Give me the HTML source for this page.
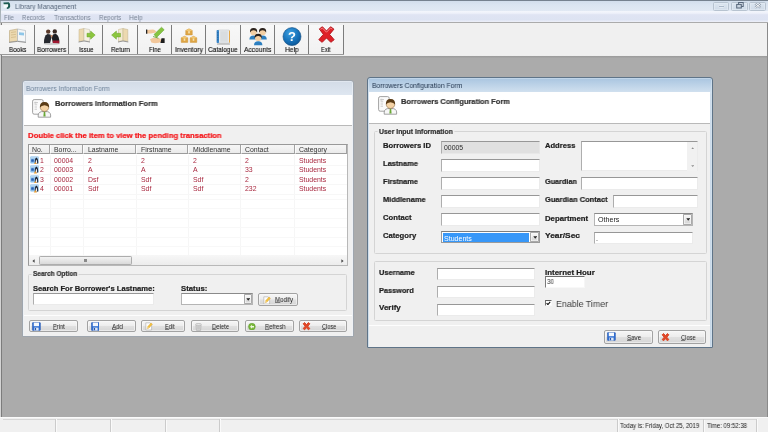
<!DOCTYPE html>
<html><head><meta charset="utf-8"><title>Library Management</title>
<style>
html,body{margin:0;padding:0;}
body{width:768px;height:432px;overflow:hidden;position:relative;background:#ababab;font-family:"Liberation Sans",sans-serif;font-size:6.6px;color:#222;}
.a{position:absolute;}
.t{position:absolute;white-space:nowrap;will-change:transform;filter:blur(0.25px);line-height:10px;height:10px;transform-origin:0 50%;}
.b{font-weight:bold;-webkit-text-stroke:0.22px;}
#titlebar{left:0;top:0;width:768px;height:11.4px;background:linear-gradient(#d2deec 0,#dbe5f1 40%,#e1e9f4 100%);border-top:0.7px solid #76828f;box-sizing:border-box;}
#menubar{left:0;top:11.4px;width:768px;height:11.1px;background:linear-gradient(#f3f6fc 0,#eef1fa 20%,#dfe4f3 34%,#dde3f2 80%,#e9ecf7 94%,#eef0f8 100%);box-sizing:border-box;}
#toolbar{left:0;top:22.5px;width:768px;height:34px;background:linear-gradient(#f0f0f0 95%,#e2e2e2);}
#tbline{left:0;top:56.3px;width:768px;height:1.4px;background:linear-gradient(#9a9a9a,#a8a8a8);}
#statusbar{left:0;top:416.6px;width:768px;height:15.4px;background:#f0f0f0;border-top:1px solid #fafafa;box-sizing:border-box;}
.sp{position:absolute;top:419.4px;height:12.6px;width:0.8px;background:#cbcbcb;box-shadow:0.8px 0 0 #fdfdfd;}
.tb{position:absolute;top:24.8px;width:34.3px;height:30.2px;background:linear-gradient(#f8f8f8,#f1f1f1);border-right:1px solid #7c7c7c;border-bottom:1px solid #9a9a9a;box-sizing:border-box;border-radius:0 0 1px 0;}
.tb .l{position:absolute;left:-5px;right:-5px;top:20.6px;text-align:center;font-size:7.2px;line-height:9px;color:#1a1a1a;}
.dlg{position:absolute;background:#f0f0f0;box-sizing:border-box;}
.inp{position:absolute;background:#fff;border:0.8px solid #ebebeb;border-top:1px solid #979797;border-left:0.9px solid #aeaeae;box-sizing:border-box;}
.btn{position:absolute;background:linear-gradient(#f6f6f6 0,#ededed 48%,#e0e0e0 52%,#d6d6d6 100%);border:0.8px solid #a2a2a2;border-radius:2px;box-sizing:border-box;box-shadow:inset 0 0 0 0.6px #fbfbfb;}
.grp{position:absolute;border:1px solid #d4d4d4;border-radius:1.5px;box-sizing:border-box;}
.gl{background:#f0f0f0;box-shadow:-1.5px 0 0 #f0f0f0,1.5px 0 0 #f0f0f0;}
.red{color:#f41418;}
.row{color:#a8283f;}
.u{background:linear-gradient(#3a3a3a,#3a3a3a) 0 100%/100% 0.6px no-repeat;}
</style></head><body>
<div class="a" id="titlebar"></div><div class="a" id="menubar"></div><div class="a" id="toolbar"></div><div class="a" id="tbline"></div><div class="a" id="statusbar"></div>
<div class="a" style="left:0px;top:22.5px;width:1.50px;height:394.10px;background:#d4d4d4;border-right:0.7px solid #7c7c7c;box-sizing:border-box;"></div>
<div class="a" style="left:766.5px;top:22.5px;width:1.50px;height:394.50px;background:#e9edf2;border-left:0.6px solid #8a8a8a;box-sizing:border-box;"></div>
<div class="t " style="left:14.75px;top:1.90px;font-size:7.6px;color:#55657a;transform:scaleX(0.879);">Library Management</div>
<svg class="a" style="left:2.6px;top:1.6px;" width="8" height="8" viewBox="0 0 8 8"><rect x="0.6" y="2" width="4.6" height="3.8" fill="#f7fbfb"/><path d="M0.4 0.5 L5.8 0.3 L7 1.8 L7.2 4.4 Q7 6.4 4.4 7 L3.4 5.9 Q5.2 5.2 5.2 3.8 L5 2.2 L0.7 2.3Z" fill="#1d5c52"/></svg>
<div class="a" style="left:0px;top:0.7px;width:1.00px;height:21.80px;background:linear-gradient(#9aa8aa,#b4bcc4);"></div>
<div class="t " style="left:4px;top:13.40px;font-size:7.5px;color:#7b8697;transform:scaleX(0.806);">File</div>
<div class="t " style="left:22.25px;top:13.40px;font-size:7.5px;color:#7b8697;transform:scaleX(0.814);">Records</div>
<div class="t " style="left:54.4px;top:13.40px;font-size:7.5px;color:#7b8697;transform:scaleX(0.858);">Transactions</div>
<div class="t " style="left:99px;top:13.40px;font-size:7.5px;color:#7b8697;transform:scaleX(0.847);">Reports</div>
<div class="t " style="left:129.4px;top:13.40px;font-size:7.5px;color:#7b8697;transform:scaleX(0.887);">Help</div>
<div class="a" style="left:712.7px;top:2px;width:16.30px;height:8.50px;border:0.7px solid #b7c3d0;border-radius:1.6px;box-sizing:border-box;background:linear-gradient(#dbe5f0,#cfdbe8);box-shadow:inset 0 0 0 0.6px #e6edf5;"></div>
<div class="a" style="left:731px;top:2px;width:16.80px;height:8.50px;border:0.7px solid #b7c3d0;border-radius:1.6px;box-sizing:border-box;background:linear-gradient(#dbe5f0,#cfdbe8);box-shadow:inset 0 0 0 0.6px #e6edf5;"></div>
<div class="a" style="left:749.4px;top:2px;width:17.10px;height:8.50px;border:0.7px solid #b7c3d0;border-radius:1.6px;box-sizing:border-box;background:linear-gradient(#dbe5f0,#cfdbe8);box-shadow:inset 0 0 0 0.6px #e6edf5;"></div>
<div class="a" style="left:717.7px;top:5px;width:7.10px;height:3.40px;border:0.7px solid #e4ebf3;border-radius:1.2px;box-sizing:border-box;background:#a9b8c9;"></div>
<svg class="a" style="left:735.5px;top:2.2px;" width="8" height="6.6" viewBox="0 0 8 6.6"><rect x="2.6" y="0.5" width="4.6" height="4" fill="#d9e2ec" stroke="#56667a" stroke-width="1"/><rect x="0.7" y="2.4" width="4.6" height="3.6" fill="#c9d4e0" stroke="#56667a" stroke-width="1"/></svg>
<svg class="a" style="left:754.3px;top:3.4px;" width="8" height="5.4" viewBox="0 0 8 5.4"><path d="M1.2 0.6 L6.6 4.8 M6.6 0.6 L1.2 4.8" stroke="#8b99aa" stroke-width="2" fill="none"/><path d="M1.2 0.6 L6.6 4.8 M6.6 0.6 L1.2 4.8" stroke="#fbfcfd" stroke-width="1" fill="none"/></svg>
<div class="tb" style="left:0.30px"></div>
<div class="t " style="left:8.75px;top:45.30px;font-size:7.4px;color:#0c0c0c;-webkit-text-stroke:0.12px;transform:scaleX(0.852);">Books</div>
<div class="tb" style="left:34.63px"></div>
<div class="t " style="left:37.4px;top:45.30px;font-size:7.4px;color:#0c0c0c;-webkit-text-stroke:0.12px;transform:scaleX(0.867);">Borrowers</div>
<div class="tb" style="left:68.96px"></div>
<div class="t " style="left:78.75px;top:45.30px;font-size:7.4px;color:#0c0c0c;-webkit-text-stroke:0.12px;transform:scaleX(0.821);">Issue</div>
<div class="tb" style="left:103.29px"></div>
<div class="t " style="left:111px;top:45.30px;font-size:7.4px;color:#0c0c0c;-webkit-text-stroke:0.12px;transform:scaleX(0.856);">Return</div>
<div class="tb" style="left:137.62px"></div>
<div class="t " style="left:148.75px;top:45.30px;font-size:7.4px;color:#0c0c0c;-webkit-text-stroke:0.12px;transform:scaleX(0.823);">Fine</div>
<div class="tb" style="left:171.95px"></div>
<div class="t " style="left:174.9px;top:45.30px;font-size:7.4px;color:#0c0c0c;-webkit-text-stroke:0.12px;transform:scaleX(0.916);">Inventory</div>
<div class="tb" style="left:206.28px"></div>
<div class="t " style="left:208.25px;top:45.30px;font-size:7.4px;color:#0c0c0c;-webkit-text-stroke:0.12px;transform:scaleX(0.883);">Catalogue</div>
<div class="tb" style="left:240.61px"></div>
<div class="t " style="left:244px;top:45.30px;font-size:7.4px;color:#0c0c0c;-webkit-text-stroke:0.12px;transform:scaleX(0.901);">Accounts</div>
<div class="tb" style="left:274.94px"></div>
<div class="t " style="left:285.3px;top:45.30px;font-size:7.4px;color:#0c0c0c;-webkit-text-stroke:0.12px;transform:scaleX(0.901);">Help</div>
<div class="tb" style="left:309.27px"></div>
<div class="t " style="left:321.3px;top:45.30px;font-size:7.4px;color:#0c0c0c;-webkit-text-stroke:0.12px;transform:scaleX(0.771);">Exit</div>
<svg class="a" style="left:8px;top:27px;" width="20" height="17" viewBox="0 0 20 17"><path d="M1.5 3.5 L9.5 2 L9.5 14 L1.5 15Z" fill="#ecd9b0" stroke="#b9a47a" stroke-width="0.6"/><path d="M9.5 2 L17.5 3.5 L17.5 15 L9.5 14Z" fill="#f4f6f7" stroke="#a9b0b5" stroke-width="0.6"/><path d="M11 5.2 L16 5.8 L16 8.6 L11 8Z" fill="#8ec6e8"/><path d="M3 5.5 L8 4.8 M3 8 L8 7.3 M3 10.5 L8 9.8" stroke="#c9b07c" stroke-width="0.6"/><path d="M1 15.4 L9.5 14.4 L18 15.4" stroke="#8f8f8f" stroke-width="0.9" fill="none"/></svg>
<svg class="a" style="left:42px;top:28px;" width="20" height="17" viewBox="0 0 20 17"><circle cx="6.2" cy="3.6" r="2.2" fill="#5a3a2a"/><circle cx="12.8" cy="3.4" r="2.2" fill="#3a2a24"/><path d="M2 15.5 Q1.5 8 5.5 6 L8.5 6.5 L9.6 9 L8 15.5Z" fill="#26282e"/><path d="M17.2 15.5 Q18 8 13.8 5.8 L11 6.5 L9.6 9 L11 15.5Z" fill="#1d1d22"/><path d="M10.8 12.5 L17.3 12.5 L17.2 15.8 L10.8 15.8Z" fill="#a01830"/><path d="M8.6 7 L10.6 7 L10.2 9.6 L9 9.6Z" fill="#c98e6a"/><ellipse cx="9.6" cy="16" rx="8" ry="0.9" fill="#cfcfcf"/></svg>
<svg class="a" style="left:77px;top:27px;" width="20" height="17" viewBox="0 0 20 17"><path d="M2 2.5 L7 1.5 L7 13.5 L2 14.5Z" fill="#ecd9b0" stroke="#c4b187" stroke-width="0.5"/><path d="M7 1.5 L12.5 2.5 L12.5 14.5 L7 13.5Z" fill="#f6f1e2" stroke="#bdb9ac" stroke-width="0.5"/><path d="M1.5 15 L7 14 L13 15" stroke="#8f8f8f" stroke-width="0.9" fill="none"/><path d="M10 6.3 L13.6 6.3 L13.6 4 L18.2 8.1 L13.6 12.2 L13.6 9.9 L10 9.9Z" fill="#8cc63f" stroke="#6aa329" stroke-width="0.5"/></svg>
<svg class="a" style="left:110px;top:27px;" width="20" height="17" viewBox="0 0 20 17"><path d="M8.5 2.5 L13 1.5 L13 13.5 L8.5 14.5Z" fill="#f3ead2" stroke="#c4b187" stroke-width="0.5"/><path d="M13 1.5 L17.8 2.5 L17.8 14.5 L13 13.5Z" fill="#ecd9b0" stroke="#bdb08c" stroke-width="0.5"/><path d="M8 15 L13 14 L18.3 15" stroke="#8f8f8f" stroke-width="0.9" fill="none"/><path d="M10.5 6.3 L6.4 6.3 L6.4 4 L1.6 8.1 L6.4 12.2 L6.4 9.9 L10.5 9.9Z" fill="#8cc63f" stroke="#6aa329" stroke-width="0.5"/></svg>
<svg class="a" style="left:144.5px;top:26px;" width="22" height="20" viewBox="0 0 22 20"><path d="M9 8.5 L16.5 1.2 L19.2 3.8 L11.5 11.5Z" fill="#86c440" stroke="#5f9f2a" stroke-width="0.5"/><path d="M2 4 L8 3.4 Q11.5 4.2 11 6.6 L6 7.6 L2 7.4Z" fill="#f2c79b"/><path d="M1 3.6 L2.3 3.6 L2.3 7.8 L1 7.8Z" fill="#222"/><path d="M5 13.2 Q10 10.6 15 12.6 L17.4 15.2 Q12 18.2 6.4 16.6Z" fill="#f2c79b"/><path d="M16.5 12.2 L19.6 12.2 L19.6 17 L15.4 17Z" fill="#1c1c1c"/><path d="M8 10.5 L13.4 12.2" stroke="#5f9f2a" stroke-width="0.8"/></svg>
<svg class="a" style="left:179.5px;top:28px;" width="20" height="16" viewBox="0 0 20 16"><path d="M5.7 2.4000000000000004 L9.0 0.8 L12.3 2.4000000000000004 L12.3 7.0 L5.7 7.0Z" fill="#dfa646" stroke="#c48a2c" stroke-width="0.4"/><path d="M5.7 2.4000000000000004 L9.0 0.8 L12.3 2.4000000000000004 L9.0 3.4000000000000004Z" fill="#f1c773"/><rect x="8.2" y="3.2" width="1.6" height="2.2" fill="#f6e2b0"/><path d="M1.2 9.799999999999999 L4.5 8.2 L7.8 9.799999999999999 L7.8 14.399999999999999 L1.2 14.399999999999999Z" fill="#dfa646" stroke="#c48a2c" stroke-width="0.4"/><path d="M1.2 9.799999999999999 L4.5 8.2 L7.8 9.799999999999999 L4.5 10.799999999999999Z" fill="#f1c773"/><rect x="3.7" y="10.6" width="1.6" height="2.2" fill="#f6e2b0"/><path d="M10.2 9.799999999999999 L13.5 8.2 L16.799999999999997 9.799999999999999 L16.799999999999997 14.399999999999999 L10.2 14.399999999999999Z" fill="#dfa646" stroke="#c48a2c" stroke-width="0.4"/><path d="M10.2 9.799999999999999 L13.5 8.2 L16.799999999999997 9.799999999999999 L13.5 10.799999999999999Z" fill="#f1c773"/><rect x="12.7" y="10.6" width="1.6" height="2.2" fill="#f6e2b0"/></svg>
<svg class="a" style="left:214.5px;top:28.5px;" width="18" height="17" viewBox="0 0 18 17"><rect x="3" y="1" width="11.5" height="13" rx="0.8" fill="#e9ecee" stroke="#b9bec2" stroke-width="0.5"/><rect x="5.2" y="2.2" width="7.6" height="10.6" fill="#d9dde0"/><rect x="1.6" y="1" width="2.4" height="13" rx="0.8" fill="#3a86c8"/><path d="M2.8 3 L2.8 12" stroke="#1f5f9c" stroke-width="0.9" stroke-dasharray="1.4 1"/><rect x="14" y="1.6" width="0.9" height="12" fill="#e8a33a"/><path d="M2 15 L15 15" stroke="#9a9a9a" stroke-width="0.9"/></svg>
<svg class="a" style="left:247.5px;top:26.5px;" width="21" height="19" viewBox="0 0 21 19"><path d="M1.3999999999999995 12.4 Q1.3999999999999995 8.4 5.6 8.4 Q9.8 8.4 9.8 12.4Z" fill="#2c7fc0"/><circle cx="5.6" cy="5" r="3.3" fill="#f3cfa3"/><path d="M1.9999999999999996 5.4 Q1.5999999999999996 1 5.6 1 Q9.6 1 9.2 5.4 Q7.6 3 5.6 3.2 Q3.5999999999999996 3 1.9999999999999996 5.4Z" fill="#2b221c"/><path d="M10.399999999999999 12.4 Q10.399999999999999 8.4 14.6 8.4 Q18.8 8.4 18.8 12.4Z" fill="#2c7fc0"/><circle cx="14.6" cy="5" r="3.3" fill="#f3cfa3"/><path d="M11.0 5.4 Q10.6 1 14.6 1 Q18.6 1 18.2 5.4 Q16.6 3 14.6 3.2 Q12.6 3 11.0 5.4Z" fill="#2b221c"/><path d="M5.999999999999999 18.200000000000003 Q5.999999999999999 14.200000000000001 10.2 14.200000000000001 Q14.399999999999999 14.200000000000001 14.399999999999999 18.200000000000003Z" fill="#2c7fc0"/><circle cx="10.2" cy="10.8" r="3.3" fill="#f3cfa3"/><path d="M6.6 11.200000000000001 Q6.199999999999999 6.800000000000001 10.2 6.800000000000001 Q14.2 6.800000000000001 13.799999999999999 11.200000000000001 Q12.2 8.8 10.2 9.0 Q8.2 8.8 6.6 11.200000000000001Z" fill="#2b221c"/></svg>
<svg class="a" style="left:282px;top:26.5px;" width="20" height="20" viewBox="0 0 20 20"><defs><radialGradient id="hg" cx="0.4" cy="0.3" r="0.8"><stop offset="0" stop-color="#3ea0e0"/><stop offset="0.6" stop-color="#1570b8"/><stop offset="1" stop-color="#0c4f8c"/></radialGradient></defs><circle cx="10" cy="9.6" r="9" fill="url(#hg)" stroke="#0d4a80" stroke-width="0.6"/><text x="10" y="14.2" text-anchor="middle" font-family="Liberation Sans, sans-serif" font-weight="bold" font-size="13" fill="#fff">?</text></svg>
<svg class="a" style="left:316.5px;top:26.4px;" width="19" height="18.5" viewBox="0 0 19 18.5"><g transform="translate(-1.3,-0.6) scale(1.2,1.1)"><path d="M3 3.2 L5.6 1.2 L9 5 L12.4 1.2 L15.2 3.4 L11.6 8.2 L15.4 13 L12.6 15.4 L9 11.4 L5.4 15.4 L2.6 13 L6.4 8.2Z" fill="#df2027" stroke="#b0141a" stroke-width="0.8" stroke-linejoin="round"/><path d="M4 3.6 L5.6 2.4 L9 6.2 L12.4 2.4 L13.8 3.4" stroke="#f58a8c" stroke-width="0.8" fill="none"/></g></svg>
<div class="sp" style="left:55.2px"></div>
<div class="sp" style="left:110.3px"></div>
<div class="sp" style="left:164.8px"></div>
<div class="sp" style="left:219.3px"></div>
<div class="sp" style="left:617.1px"></div>
<div class="sp" style="left:702.6px"></div>
<div class="sp" style="left:755.6px"></div>
<div class="a" style="left:3.1px;top:419.3px;width:52.10px;height:0.70px;background:#d6d6d6;"></div>
<div class="a" style="left:56.800000000000004px;top:419.3px;width:53.50px;height:0.70px;background:#d6d6d6;"></div>
<div class="a" style="left:111.89999999999999px;top:419.3px;width:52.90px;height:0.70px;background:#d6d6d6;"></div>
<div class="a" style="left:166.4px;top:419.3px;width:52.90px;height:0.70px;background:#d6d6d6;"></div>
<div class="a" style="left:220.9px;top:419.3px;width:396.20px;height:0.70px;background:#d6d6d6;"></div>
<div class="a" style="left:618.7px;top:419.3px;width:83.90px;height:0.70px;background:#d6d6d6;"></div>
<div class="a" style="left:704.2px;top:419.3px;width:51.40px;height:0.70px;background:#d6d6d6;"></div>
<div class="t " style="left:619.75px;top:421.30px;font-size:6.6px;color:#222;transform:scaleX(0.910);">Today is: Friday, Oct 25, 2019</div>
<div class="t " style="left:706.5px;top:421.30px;font-size:6.6px;color:#222;transform:scaleX(0.914);">Time: 09:52:38</div>
<div class="a" style="left:22.2px;top:79.8px;width:332.00px;height:257.40px;background:linear-gradient(#d3dce7 0,#dfe7f1 15px,#e8ecf1 16px,#eceff2 100%);border:0.6px solid #9fa6ae;border-radius:3px 3px 1px 1px;box-sizing:border-box;box-shadow:inset 0 0 0 0.6px #eef2f7;"></div>
<div class="t " style="left:26px;top:84.00px;font-size:7.5px;color:#6d8299;transform:scaleX(0.897);">Borrowers Information Form</div>
<div class="a" style="left:24.3px;top:94.6px;width:328.10px;height:241.20px;background:#f0f0f0;"></div>
<div class="a" style="left:24.3px;top:94.6px;width:328.10px;height:31.20px;background:#fff;border-bottom:0.8px solid #b9b9b9;box-sizing:border-box;"></div>
<svg class="a" style="left:32px;top:98.6px;" width="20" height="19" viewBox="0 0 20 19"><rect x="0.6" y="0.6" width="10.6" height="14.6" rx="1.6" fill="#fbfbfb" stroke="#8a8a8a" stroke-width="0.8"/><path d="M2.6 3.6 L6 3.6 M2.6 5.8 L5.2 5.8 M2.6 8 L5 8 M2.6 10.2 L5 10.2" stroke="#b5b5b5" stroke-width="0.7"/><rect x="2.4" y="2.8" width="2" height="1.8" fill="#c9c9c9"/><path d="M6.2 18.2 Q5.6 13.2 9.6 12.6 L15.4 12.6 Q19.2 13.2 18.6 18.2Z" fill="#f7f7f7" stroke="#7d7d7d" stroke-width="0.7"/><path d="M11.8 12.8 L13.2 12.8 L13.6 17.6 L11.4 17.6Z" fill="#6aa836"/><circle cx="12.5" cy="8.2" r="4.3" fill="#f4d2a4" stroke="#7a5a34" stroke-width="0.5"/><path d="M8 8.6 Q7.4 3 12.5 3 Q17.6 3 17 8.6 Q15.6 6.4 12.5 6.2 Q9.4 6.4 8 8.6Z" fill="#5a3c17"/></svg>
<div class="t b" style="left:55.3px;top:99.40px;font-size:7.7px;color:#333;transform:scaleX(0.985);">Borrowers Information Form</div>
<div class="t b red" style="left:28.1px;top:130.90px;font-size:7.8px;transform:scaleX(0.982);">Double click the item to view the pending transaction</div>
<div class="a" style="left:28.3px;top:144.4px;width:319.30px;height:121.20px;background:#fff;border:0.8px solid #b8b8b8;border-top-color:#999;border-left-color:#999;box-sizing:border-box;"></div>
<div class="a" style="left:28.8px;top:145.0px;width:21.20px;height:9.30px;background:linear-gradient(#f6f6f6,#ebebeb);border-right:0.8px solid #a2a2a2;border-bottom:0.8px solid #9c9c9c;border-left:0.6px solid #fbfbfb;box-sizing:border-box;"></div>
<div class="t " style="left:32.0px;top:145.40px;font-size:6.9px;color:#333;">No.</div>
<div class="a" style="left:50px;top:145.0px;width:33.40px;height:9.30px;background:linear-gradient(#f6f6f6,#ebebeb);border-right:0.8px solid #a2a2a2;border-bottom:0.8px solid #9c9c9c;border-left:0.6px solid #fbfbfb;box-sizing:border-box;"></div>
<div class="t " style="left:54.3px;top:145.40px;font-size:6.9px;color:#333;">Borro...</div>
<div class="a" style="left:49.7px;top:155px;width:0.60px;height:100.50px;background:#f6f6f6;"></div>
<div class="a" style="left:83.4px;top:145.0px;width:52.80px;height:9.30px;background:linear-gradient(#f6f6f6,#ebebeb);border-right:0.8px solid #a2a2a2;border-bottom:0.8px solid #9c9c9c;border-left:0.6px solid #fbfbfb;box-sizing:border-box;"></div>
<div class="t " style="left:87.7px;top:145.40px;font-size:6.9px;color:#333;">Lastname</div>
<div class="a" style="left:83.10000000000001px;top:155px;width:0.60px;height:100.50px;background:#f6f6f6;"></div>
<div class="a" style="left:136.2px;top:145.0px;width:52.00px;height:9.30px;background:linear-gradient(#f6f6f6,#ebebeb);border-right:0.8px solid #a2a2a2;border-bottom:0.8px solid #9c9c9c;border-left:0.6px solid #fbfbfb;box-sizing:border-box;"></div>
<div class="t " style="left:140.5px;top:145.40px;font-size:6.9px;color:#333;">Firstname</div>
<div class="a" style="left:135.89999999999998px;top:155px;width:0.60px;height:100.50px;background:#f6f6f6;"></div>
<div class="a" style="left:188.2px;top:145.0px;width:52.40px;height:9.30px;background:linear-gradient(#f6f6f6,#ebebeb);border-right:0.8px solid #a2a2a2;border-bottom:0.8px solid #9c9c9c;border-left:0.6px solid #fbfbfb;box-sizing:border-box;"></div>
<div class="t " style="left:192.5px;top:145.40px;font-size:6.9px;color:#333;">Middlename</div>
<div class="a" style="left:187.89999999999998px;top:155px;width:0.60px;height:100.50px;background:#f6f6f6;"></div>
<div class="a" style="left:240.6px;top:145.0px;width:54.00px;height:9.30px;background:linear-gradient(#f6f6f6,#ebebeb);border-right:0.8px solid #a2a2a2;border-bottom:0.8px solid #9c9c9c;border-left:0.6px solid #fbfbfb;box-sizing:border-box;"></div>
<div class="t " style="left:244.9px;top:145.40px;font-size:6.9px;color:#333;">Contact</div>
<div class="a" style="left:240.29999999999998px;top:155px;width:0.60px;height:100.50px;background:#f6f6f6;"></div>
<div class="a" style="left:294.6px;top:145.0px;width:52.80px;height:9.30px;background:linear-gradient(#f6f6f6,#ebebeb);border-right:0.8px solid #a2a2a2;border-bottom:0.8px solid #9c9c9c;border-left:0.6px solid #fbfbfb;box-sizing:border-box;"></div>
<div class="t " style="left:298.90000000000003px;top:145.40px;font-size:6.9px;color:#333;">Category</div>
<div class="a" style="left:294.3px;top:155px;width:0.60px;height:100.50px;background:#f6f6f6;"></div>
<svg class="a" style="left:29.8px;top:155.6px;" width="9.2" height="8.6" viewBox="0 0 9.2 8.6"><rect x="0.3" y="0.4" width="8.4" height="7.2" rx="0.8" fill="#8ec0ea"/><rect x="0.3" y="0.4" width="8.4" height="2" rx="0.8" fill="#b5d8f3"/><rect x="1.2" y="3.2" width="2.6" height="2.6" rx="0.6" fill="#2c62b4"/><path d="M4.8 7.4 Q4.6 2.6 6.3 1.6 Q8.4 2.8 8.2 7.4Z" fill="#1c2230"/><path d="M5.6 7.4 Q5.6 4.4 6.4 3.6 Q7.3 4.6 7.2 7.4Z" fill="#f4f4f4"/><path d="M3.8 8.4 L5.4 6 L7 8.4Z" fill="#f0a030"/></svg>
<div class="t row" style="left:40px;top:155.60px;font-size:6.9px;">1</div>
<div class="t row" style="left:54.1px;top:155.60px;font-size:6.9px;">00004</div>
<div class="t row" style="left:88.0px;top:155.60px;font-size:6.9px;">2</div>
<div class="t row" style="left:140.79999999999998px;top:155.60px;font-size:6.9px;">2</div>
<div class="t row" style="left:192.79999999999998px;top:155.60px;font-size:6.9px;">2</div>
<div class="t row" style="left:245.2px;top:155.60px;font-size:6.9px;">2</div>
<div class="t row" style="left:299.20000000000005px;top:155.60px;font-size:6.9px;">Students</div>
<div class="a" style="left:29.3px;top:164.89999999999998px;width:317.30px;height:0.50px;background:#f7f7f7;"></div>
<svg class="a" style="left:29.8px;top:165.15px;" width="9.2" height="8.6" viewBox="0 0 9.2 8.6"><rect x="0.3" y="0.4" width="8.4" height="7.2" rx="0.8" fill="#8ec0ea"/><rect x="0.3" y="0.4" width="8.4" height="2" rx="0.8" fill="#b5d8f3"/><rect x="1.2" y="3.2" width="2.6" height="2.6" rx="0.6" fill="#2c62b4"/><path d="M4.8 7.4 Q4.6 2.6 6.3 1.6 Q8.4 2.8 8.2 7.4Z" fill="#1c2230"/><path d="M5.6 7.4 Q5.6 4.4 6.4 3.6 Q7.3 4.6 7.2 7.4Z" fill="#f4f4f4"/><path d="M3.8 8.4 L5.4 6 L7 8.4Z" fill="#f0a030"/></svg>
<div class="t row" style="left:40px;top:165.15px;font-size:6.9px;">2</div>
<div class="t row" style="left:54.1px;top:165.15px;font-size:6.9px;">00003</div>
<div class="t row" style="left:88.0px;top:165.15px;font-size:6.9px;">A</div>
<div class="t row" style="left:140.79999999999998px;top:165.15px;font-size:6.9px;">A</div>
<div class="t row" style="left:192.79999999999998px;top:165.15px;font-size:6.9px;">A</div>
<div class="t row" style="left:245.2px;top:165.15px;font-size:6.9px;">33</div>
<div class="t row" style="left:299.20000000000005px;top:165.15px;font-size:6.9px;">Students</div>
<div class="a" style="left:29.3px;top:174.45px;width:317.30px;height:0.50px;background:#f7f7f7;"></div>
<svg class="a" style="left:29.8px;top:174.7px;" width="9.2" height="8.6" viewBox="0 0 9.2 8.6"><rect x="0.3" y="0.4" width="8.4" height="7.2" rx="0.8" fill="#8ec0ea"/><rect x="0.3" y="0.4" width="8.4" height="2" rx="0.8" fill="#b5d8f3"/><rect x="1.2" y="3.2" width="2.6" height="2.6" rx="0.6" fill="#2c62b4"/><path d="M4.8 7.4 Q4.6 2.6 6.3 1.6 Q8.4 2.8 8.2 7.4Z" fill="#1c2230"/><path d="M5.6 7.4 Q5.6 4.4 6.4 3.6 Q7.3 4.6 7.2 7.4Z" fill="#f4f4f4"/><path d="M3.8 8.4 L5.4 6 L7 8.4Z" fill="#f0a030"/></svg>
<div class="t row" style="left:40px;top:174.70px;font-size:6.9px;">3</div>
<div class="t row" style="left:54.1px;top:174.70px;font-size:6.9px;">00002</div>
<div class="t row" style="left:88.0px;top:174.70px;font-size:6.9px;">Dsf</div>
<div class="t row" style="left:140.79999999999998px;top:174.70px;font-size:6.9px;">Sdf</div>
<div class="t row" style="left:192.79999999999998px;top:174.70px;font-size:6.9px;">Sdf</div>
<div class="t row" style="left:245.2px;top:174.70px;font-size:6.9px;">2</div>
<div class="t row" style="left:299.20000000000005px;top:174.70px;font-size:6.9px;">Students</div>
<div class="a" style="left:29.3px;top:183.99999999999997px;width:317.30px;height:0.50px;background:#f7f7f7;"></div>
<svg class="a" style="left:29.8px;top:184.25px;" width="9.2" height="8.6" viewBox="0 0 9.2 8.6"><rect x="0.3" y="0.4" width="8.4" height="7.2" rx="0.8" fill="#8ec0ea"/><rect x="0.3" y="0.4" width="8.4" height="2" rx="0.8" fill="#b5d8f3"/><rect x="1.2" y="3.2" width="2.6" height="2.6" rx="0.6" fill="#2c62b4"/><path d="M4.8 7.4 Q4.6 2.6 6.3 1.6 Q8.4 2.8 8.2 7.4Z" fill="#1c2230"/><path d="M5.6 7.4 Q5.6 4.4 6.4 3.6 Q7.3 4.6 7.2 7.4Z" fill="#f4f4f4"/><path d="M3.8 8.4 L5.4 6 L7 8.4Z" fill="#f0a030"/></svg>
<div class="t row" style="left:40px;top:184.25px;font-size:6.9px;">4</div>
<div class="t row" style="left:54.1px;top:184.25px;font-size:6.9px;">00001</div>
<div class="t row" style="left:88.0px;top:184.25px;font-size:6.9px;">Sdf</div>
<div class="t row" style="left:140.79999999999998px;top:184.25px;font-size:6.9px;">Sdf</div>
<div class="t row" style="left:192.79999999999998px;top:184.25px;font-size:6.9px;">Sdf</div>
<div class="t row" style="left:245.2px;top:184.25px;font-size:6.9px;">232</div>
<div class="t row" style="left:299.20000000000005px;top:184.25px;font-size:6.9px;">Students</div>
<div class="a" style="left:29.3px;top:193.54999999999998px;width:317.30px;height:0.50px;background:#f7f7f7;"></div>
<div class="a" style="left:29.3px;top:198.7px;width:317.30px;height:0.50px;background:#f8f8f8;"></div>
<div class="a" style="left:29.3px;top:208.25px;width:317.30px;height:0.50px;background:#f8f8f8;"></div>
<div class="a" style="left:29.3px;top:217.79999999999998px;width:317.30px;height:0.50px;background:#f8f8f8;"></div>
<div class="a" style="left:29.3px;top:227.35px;width:317.30px;height:0.50px;background:#f8f8f8;"></div>
<div class="a" style="left:29.3px;top:236.89999999999998px;width:317.30px;height:0.50px;background:#f8f8f8;"></div>
<div class="a" style="left:29.3px;top:246.45px;width:317.30px;height:0.50px;background:#f8f8f8;"></div>
<div class="a" style="left:29.1px;top:255.2px;width:317.70px;height:9.80px;background:linear-gradient(#f7f7f7,#ececec);"></div>
<div class="a" style="left:38.8px;top:255.8px;width:93.10px;height:8.90px;background:linear-gradient(#f2f2f2,#e6e6e6 50%,#d9d9d9);border:0.7px solid #adadad;border-radius:1.2px;box-sizing:border-box;"></div>
<div class="a" style="left:83.55px;top:258.8px;width:0.50px;height:3.20px;background:#8a8a8a;"></div>
<div class="a" style="left:84.75px;top:258.8px;width:0.50px;height:3.20px;background:#8a8a8a;"></div>
<div class="a" style="left:85.95px;top:258.8px;width:0.50px;height:3.20px;background:#8a8a8a;"></div>
<svg class="a" style="left:31.8px;top:258.5px" width="3" height="4" viewBox="0 0 3 4"><path d="M2.6 0.3 L0.4 2 L2.6 3.7Z" fill="#444"/></svg>
<svg class="a" style="left:341.4px;top:258.5px" width="3" height="4" viewBox="0 0 3 4"><path d="M0.4 0.3 L2.6 2 L0.4 3.7Z" fill="#444"/></svg>
<div class="grp" style="left:28.2px;top:273.8px;width:319.00px;height:36.80px;"></div>
<div class="t b gl" style="left:33.25px;top:269.20px;font-size:6.9px;color:#333;transform:scaleX(0.939);">Search Option</div>
<div class="t b" style="left:32.5px;top:283.80px;font-size:7.6px;color:#1e1e1e;transform:scaleX(1.001);">Search For Borrower's Lastname:</div>
<div class="inp" style="left:32.5px;top:293.3px;width:121.30px;height:11.70px;"></div>
<div class="t b" style="left:181.2px;top:283.80px;font-size:7.6px;color:#1e1e1e;transform:scaleX(1.021);">Status:</div>
<div class="inp" style="left:180.5px;top:293.3px;width:72.10px;height:11.70px;border-color:#b5b5b5;border-top-color:#8a8a8a;"></div>
<div class="btn" style="left:243.6px;top:294.1px;width:8.40px;height:10.10px;border-radius:0.8px;border-color:#a9a9a9;"></div>
<svg class="a" style="left:245.7px;top:297.9px" width="4.4" height="3" viewBox="0 0 4.4 3"><path d="M0.3 0.3 L4.1 0.3 L2.2 2.7Z" fill="#222"/></svg>
<div class="btn" style="left:258.1px;top:293.3px;width:39.60px;height:12.30px;"></div>
<div class="t " style="left:275px;top:295.30px;font-size:6.8px;color:#222;transform:scaleX(0.894);"><span class="u">M</span>odify</div>
<svg class="a" style="left:262.5px;top:295.6px;" width="8" height="8.6" viewBox="0 0 8 8.6"><path d="M0.8 0.8 L5 0.8 L6.6 2.4 L6.6 8 L0.8 8Z" fill="#fcfcfc" stroke="#a9a9a9" stroke-width="0.6"/><path d="M2 6.8 L2.6 4.8 L6 1 L7.4 2.2 L4 6Z" fill="#f4c542" stroke="#d89a1e" stroke-width="0.4"/><path d="M2 6.8 L2.6 4.8 L4 6Z" fill="#f0e0b8"/></svg>
<div class="btn" style="left:28.8px;top:320.2px;width:48.80px;height:12.30px;"></div>
<div class="t " style="left:53px;top:322.20px;font-size:6.8px;color:#222;transform:scaleX(0.843);"><span class="u">P</span>rint</div>
<svg class="a" style="left:32.3px;top:321.9px;" width="8.8" height="9" viewBox="0 0 8.8 9"><rect x="0.4" y="0.4" width="8" height="8.2" rx="0.8" fill="#2f6ed2" stroke="#1f4fa8" stroke-width="0.5"/><rect x="1.8" y="0.6" width="5.2" height="3.6" fill="#f4f8fd"/><rect x="2.2" y="5.6" width="4.4" height="3" fill="#dfe9f7"/><rect x="2.8" y="6" width="1.3" height="2.2" fill="#2a56a8"/></svg>
<div class="btn" style="left:87.1px;top:320.2px;width:49.00px;height:12.30px;"></div>
<div class="t " style="left:112px;top:322.20px;font-size:6.8px;color:#222;transform:scaleX(0.900);"><span class="u">A</span>dd</div>
<svg class="a" style="left:90.5px;top:321.9px;" width="8.8" height="9" viewBox="0 0 8.8 9"><rect x="0.4" y="0.4" width="8" height="8.2" rx="0.8" fill="#2f6ed2" stroke="#1f4fa8" stroke-width="0.5"/><rect x="1.8" y="0.6" width="5.2" height="3.6" fill="#f4f8fd"/><rect x="2.2" y="5.6" width="4.4" height="3" fill="#dfe9f7"/><rect x="2.8" y="6" width="1.3" height="2.2" fill="#2a56a8"/></svg>
<div class="btn" style="left:141.3px;top:320.2px;width:44.20px;height:12.30px;"></div>
<div class="t " style="left:164.7px;top:322.20px;font-size:6.8px;color:#222;transform:scaleX(0.835);"><span class="u">E</span>dit</div>
<svg class="a" style="left:145px;top:322px;" width="8" height="8.6" viewBox="0 0 8 8.6"><path d="M0.8 0.8 L5 0.8 L6.6 2.4 L6.6 8 L0.8 8Z" fill="#fcfcfc" stroke="#a9a9a9" stroke-width="0.6"/><path d="M2 6.8 L2.6 4.8 L6 1 L7.4 2.2 L4 6Z" fill="#f4c542" stroke="#d89a1e" stroke-width="0.4"/><path d="M2 6.8 L2.6 4.8 L4 6Z" fill="#f0e0b8"/></svg>
<div class="btn" style="left:190.7px;top:320.2px;width:48.80px;height:12.30px;"></div>
<div class="t " style="left:212.3px;top:322.20px;font-size:6.8px;color:#222;transform:scaleX(0.869);"><span class="u">D</span>elete</div>
<svg class="a" style="left:194.7px;top:322.6px;" width="7" height="8" viewBox="0 0 7 8"><path d="M0.9 1.6 L6.1 1.6 L5.6 7.4 L1.4 7.4Z" fill="#dcdcdc" stroke="#9c9c9c" stroke-width="0.5"/><ellipse cx="3.5" cy="1.4" rx="2.8" ry="0.9" fill="#efefef" stroke="#9a9a9a" stroke-width="0.5"/><path d="M2.4 3 L2.6 6.6 M3.5 3 L3.5 6.6 M4.6 3 L4.4 6.6" stroke="#b4b4b4" stroke-width="0.5"/></svg>
<div class="btn" style="left:244.5px;top:320.2px;width:49.10px;height:12.30px;"></div>
<div class="t " style="left:264.5px;top:322.20px;font-size:6.8px;color:#222;transform:scaleX(0.861);"><span class="u">R</span>efresh</div>
<svg class="a" style="left:248.2px;top:322.8px;" width="8" height="7.6" viewBox="0 0 8 7.6"><circle cx="3.9" cy="3.7" r="3.4" fill="#7ab83a" stroke="#5a962a" stroke-width="0.5"/><path d="M2 3.8 L4 1.8 L4 3 L6 3 L6 4.6 L4 4.6 L4 5.8Z" fill="#eef7e0"/></svg>
<div class="btn" style="left:298.6px;top:320.2px;width:48.90px;height:12.30px;"></div>
<div class="t " style="left:321.6px;top:322.20px;font-size:6.8px;color:#222;transform:scaleX(0.822);"><span class="u">C</span>lose</div>
<svg class="a" style="left:302px;top:322.2px;" width="9" height="8.6" viewBox="0 0 9 8.6"><path d="M1.2 1.8 L2.6 0.6 L4.5 2.8 L6.4 0.6 L7.8 1.8 L5.8 4.2 L7.8 6.6 L6.4 7.8 L4.5 5.6 L2.6 7.8 L1.2 6.6 L3.2 4.2Z" fill="#e2492a" stroke="#d8401f" stroke-width="1" stroke-linejoin="round"/></svg>
<div class="a" style="left:24.3px;top:314.5px;width:328.10px;height:1.00px;background:linear-gradient(#d6d6d6 50%,#fdfdfd 50%);"></div>
<div class="a" style="left:367.2px;top:77.3px;width:345.50px;height:271.20px;background:linear-gradient(#a9c5e0 0,#d3e2f0 15px,#cddceb 16px,#c6d7e7 100%);border:0.8px solid #5f7488;border-radius:3px 3px 1px 1px;box-sizing:border-box;box-shadow:inset 0 0 0 0.6px #d6e4f1;"></div>
<div class="t " style="left:371.75px;top:81.10px;font-size:7.5px;color:#1d3049;transform:scaleX(0.898);">Borrowers Configuration Form</div>
<div class="a" style="left:369.4px;top:92.4px;width:340.70px;height:254.40px;background:#f0f0f0;"></div>
<div class="a" style="left:369.4px;top:325.2px;width:340.70px;height:1.00px;background:linear-gradient(#d6d6d6 50%,#fdfdfd 50%);"></div>
<div class="a" style="left:369.4px;top:92.4px;width:340.70px;height:31.20px;background:#fff;border-bottom:0.8px solid #b9b9b9;box-sizing:border-box;"></div>
<svg class="a" style="left:377.6px;top:95.8px;" width="20" height="19" viewBox="0 0 20 19"><rect x="0.6" y="0.6" width="10.6" height="14.6" rx="1.6" fill="#fbfbfb" stroke="#8a8a8a" stroke-width="0.8"/><path d="M2.6 3.6 L6 3.6 M2.6 5.8 L5.2 5.8 M2.6 8 L5 8 M2.6 10.2 L5 10.2" stroke="#b5b5b5" stroke-width="0.7"/><rect x="2.4" y="2.8" width="2" height="1.8" fill="#c9c9c9"/><path d="M6.2 18.2 Q5.6 13.2 9.6 12.6 L15.4 12.6 Q19.2 13.2 18.6 18.2Z" fill="#f7f7f7" stroke="#7d7d7d" stroke-width="0.7"/><path d="M11.8 12.8 L13.2 12.8 L13.6 17.6 L11.4 17.6Z" fill="#6aa836"/><circle cx="12.5" cy="8.2" r="4.3" fill="#f4d2a4" stroke="#7a5a34" stroke-width="0.5"/><path d="M8 8.6 Q7.4 3 12.5 3 Q17.6 3 17 8.6 Q15.6 6.4 12.5 6.2 Q9.4 6.4 8 8.6Z" fill="#5a3c17"/></svg>
<div class="t b" style="left:401.1px;top:96.50px;font-size:7.7px;color:#333;transform:scaleX(0.969);">Borrowers Configuration Form</div>
<div class="grp" style="left:374.4px;top:131.3px;width:332.20px;height:122.30px;"></div>
<div class="t b gl" style="left:378.75px;top:126.70px;font-size:6.9px;color:#333;transform:scaleX(0.998);">User Input Information</div>
<div class="t b" style="left:383px;top:141.40px;font-size:7.6px;color:#1e1e1e;transform:scaleX(1.007);">Borrowers ID</div>
<div class="t b" style="left:383px;top:159.40px;font-size:7.6px;color:#1e1e1e;transform:scaleX(0.984);">Lastname</div>
<div class="t b" style="left:383px;top:177.40px;font-size:7.6px;color:#1e1e1e;transform:scaleX(0.962);">Firstname</div>
<div class="t b" style="left:383px;top:195.40px;font-size:7.6px;color:#1e1e1e;transform:scaleX(0.968);">Middlename</div>
<div class="t b" style="left:383px;top:213.40px;font-size:7.6px;color:#1e1e1e;transform:scaleX(1.008);">Contact</div>
<div class="t b" style="left:383px;top:231.30px;font-size:7.6px;color:#1e1e1e;transform:scaleX(1.010);">Category</div>
<div class="inp" style="left:441px;top:141.3px;width:98.60px;height:12.30px;background:#e0e0e0;border-right-color:#e6e6e6;border-bottom-color:#e8e8e8;"></div>
<div class="t " style="left:443.5px;top:143.10px;font-size:6.9px;color:#2c2c2c;transform:scaleX(0.978);">00005</div>
<div class="inp" style="left:441px;top:159.3px;width:98.60px;height:12.40px;"></div>
<div class="inp" style="left:441px;top:177.3px;width:98.60px;height:12.40px;"></div>
<div class="inp" style="left:441px;top:195.3px;width:98.60px;height:12.40px;"></div>
<div class="inp" style="left:441px;top:213.2px;width:98.60px;height:12.40px;"></div>
<div class="inp" style="left:441px;top:231.3px;width:98.60px;height:12.00px;border-color:#9a9a9a;border-top-color:#7e7e7e;"></div>
<div class="a" style="left:443px;top:233.2px;width:86.00px;height:9.00px;background:#3797f8;"></div>
<div class="t " style="left:443.9px;top:233.50px;font-size:6.9px;color:#fff;transform:scaleX(1.024);">Students</div>
<div class="btn" style="left:530.3px;top:232.3px;width:8.60px;height:10.20px;border-radius:0.8px;border-color:#a9a9a9;"></div>
<svg class="a" style="left:532.6px;top:236.2px" width="4.4" height="3" viewBox="0 0 4.4 3"><path d="M0.3 0.3 L4.1 0.3 L2.2 2.7Z" fill="#222"/></svg>
<div class="t b" style="left:544.75px;top:141.40px;font-size:7.6px;color:#1e1e1e;transform:scaleX(0.995);">Address</div>
<div class="t b" style="left:544.75px;top:177.40px;font-size:7.6px;color:#1e1e1e;transform:scaleX(0.955);">Guardian</div>
<div class="t b" style="left:544.75px;top:195.40px;font-size:7.6px;color:#1e1e1e;transform:scaleX(0.981);">Guardian Contact</div>
<div class="t b" style="left:544.75px;top:213.50px;font-size:7.6px;color:#1e1e1e;transform:scaleX(1.022);">Department</div>
<div class="t b" style="left:544.75px;top:231.40px;font-size:7.6px;color:#1e1e1e;transform:scaleX(1.105);">Year/Sec</div>
<div class="inp" style="left:581px;top:141.3px;width:116.60px;height:30.10px;"></div>
<div class="a" style="left:687.2px;top:142.3px;width:9.80px;height:28.50px;background:#f1f1f1;"></div>
<svg class="a" style="left:690.9px;top:146.6px;" width="3.4" height="2.4" viewBox="0 0 3.4 2.4"><path d="M0.2 2.2 L1.7 0.3 L3.2 2.2Z" fill="#8f8f8f"/></svg>
<svg class="a" style="left:690.9px;top:165.4px;" width="3.4" height="2.4" viewBox="0 0 3.4 2.4"><path d="M0.2 0.2 L3.2 0.2 L1.7 2.1Z" fill="#8f8f8f"/></svg>
<div class="inp" style="left:581px;top:177.3px;width:116.60px;height:12.40px;"></div>
<div class="inp" style="left:612.5px;top:195.3px;width:85.10px;height:12.40px;"></div>
<div class="inp" style="left:594.4px;top:213.4px;width:98.20px;height:12.20px;border-color:#b5b5b5;border-top-color:#8a8a8a;"></div>
<div class="t " style="left:597.9px;top:215.20px;font-size:7.1px;color:#222;transform:scaleX(0.995);">Others</div>
<div class="btn" style="left:683.4px;top:214.4px;width:8.50px;height:10.30px;border-radius:0.8px;border-color:#a9a9a9;"></div>
<svg class="a" style="left:685.5px;top:218.2px;" width="4.4" height="3" viewBox="0 0 4.4 3"><path d="M0.3 0.3 L4.1 0.3 L2.2 2.7Z" fill="#222"/></svg>
<div class="inp" style="left:594.4px;top:231.5px;width:98.20px;height:12.30px;"></div>
<div class="t " style="left:596px;top:233.60px;font-size:7.1px;color:#222;">.</div>
<div class="grp" style="left:374.4px;top:261.2px;width:332.20px;height:59.40px;"></div>
<div class="t b" style="left:378.5px;top:267.60px;font-size:7.6px;color:#1e1e1e;transform:scaleX(0.973);">Username</div>
<div class="t b" style="left:378.5px;top:285.60px;font-size:7.6px;color:#1e1e1e;transform:scaleX(0.969);">Password</div>
<div class="t b" style="left:378.5px;top:303.40px;font-size:7.6px;color:#1e1e1e;transform:scaleX(1.051);">Verify</div>
<div class="inp" style="left:437.4px;top:267.5px;width:97.80px;height:12.00px;"></div>
<div class="inp" style="left:437.4px;top:285.6px;width:97.80px;height:12.00px;"></div>
<div class="inp" style="left:437.4px;top:303.6px;width:97.80px;height:12.00px;"></div>
<div class="t b" style="left:545px;top:267.50px;font-size:7.6px;color:#1e1e1e;transform:scaleX(1.043);">Internet Hour</div>
<div class="inp" style="left:545px;top:276.4px;width:39.80px;height:11.20px;border-top-color:#6a6a6a;border-left-color:#7a7a7a;border-right-color:#f6f6f6;border-bottom-color:#f8f8f8;"></div>
<div class="t " style="left:546.6px;top:277.30px;font-size:6.8px;color:#333;transform:scaleX(0.912);">30</div>
<div class="inp" style="left:545px;top:299.5px;width:6.70px;height:6.90px;border-color:#f8f8f8;border-top-color:#5e5e5e;border-left-color:#6e6e6e;"></div>
<svg class="a" style="left:546.3px;top:300.7px;" width="4.8" height="4.8" viewBox="0 0 4.8 4.8"><path d="M0.6 2.1 L1.9 3.6 L4.2 0.9" stroke="#111" stroke-width="1.1" fill="none"/></svg>
<div class="t " style="left:555.75px;top:298.60px;font-size:9.6px;color:#404040;transform:scaleX(0.922);">Enable Timer</div>
<div class="btn" style="left:603.8px;top:330.3px;width:48.80px;height:13.30px;"></div>
<div class="t " style="left:626.9px;top:333.00px;font-size:6.8px;color:#222;transform:scaleX(0.909);"><span class="u">S</span>ave</div>
<svg class="a" style="left:607.2px;top:332.4px;" width="8.8" height="9" viewBox="0 0 8.8 9"><rect x="0.4" y="0.4" width="8" height="8.2" rx="0.8" fill="#2f6ed2" stroke="#1f4fa8" stroke-width="0.5"/><rect x="1.8" y="0.6" width="5.2" height="3.6" fill="#f4f8fd"/><rect x="2.2" y="5.6" width="4.4" height="3" fill="#dfe9f7"/><rect x="2.8" y="6" width="1.3" height="2.2" fill="#2a56a8"/></svg>
<div class="btn" style="left:658.2px;top:330.3px;width:48.30px;height:13.30px;"></div>
<div class="t " style="left:680.8px;top:333.00px;font-size:6.8px;color:#222;transform:scaleX(0.845);"><span class="u">C</span>lose</div>
<svg class="a" style="left:661.4px;top:332.6px;" width="9" height="8.6" viewBox="0 0 9 8.6"><path d="M1.2 1.8 L2.6 0.6 L4.5 2.8 L6.4 0.6 L7.8 1.8 L5.8 4.2 L7.8 6.6 L6.4 7.8 L4.5 5.6 L2.6 7.8 L1.2 6.6 L3.2 4.2Z" fill="#e2492a" stroke="#d8401f" stroke-width="1" stroke-linejoin="round"/></svg>
</body></html>
